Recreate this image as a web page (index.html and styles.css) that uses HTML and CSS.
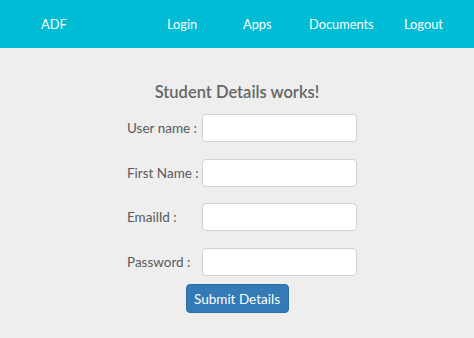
FILE: index.html
```html
<!DOCTYPE html>
<html>
<head>
<meta charset="utf-8">
<link rel="stylesheet" href="styles.css">
</head>
<body>
<nav class="navbar">
  <a class="brand">ADF</a>
  <ul class="nav-links">
    <li class="nav-login"><a>Login</a></li>
    <li class="nav-apps"><a>Apps</a></li>
    <li class="nav-docs"><a>Documents</a></li>
    <li class="nav-logout"><a>Logout</a></li>
  </ul>
</nav>
<main class="content">
  <h2 class="title">Student Details works!</h2>
  <form class="form">
    <div class="row"><label>User name :</label><input type="text"></div>
    <div class="row"><label>First Name :</label><input type="text"></div>
    <div class="row"><label>EmailId :</label><input type="text"></div>
    <div class="row"><label>Password :</label><input type="password"></div>
    <button type="button" class="btn">Submit Details</button>
  </form>
</main>
</body>
</html>
```
FILE: styles.css
```css
html, body {
  margin: 0;
  padding: 0;
  height: 100%;
}
body {
  background: #eeeeee;
  font-family: Lato, "Open Sans", sans-serif;
  color: #555;
}
.navbar {
  height: 48px;
  background: #00bcd4;
  display: flex;
  align-items: center;
  color: #fff;
  font-size: 12.8px;
}
.brand {
  margin-left: 41px;
  width: 24px;
}
.nav-links {
  list-style: none;
  margin: 0;
  padding: 0;
  display: flex;
}
.nav-login { margin-left: 102px; width: 76px; }
.nav-apps { width: 66px; }
.nav-docs { width: 95px; }
.nav-logout { }
.content {
  display: flex;
  flex-direction: column;
  align-items: center;
}
.title {
  margin: 33px 0 0;
  font-size: 16.5px;
  font-weight: 600;
  color: #666;
  line-height: 22px;
}
.form {
  display: flex;
  flex-direction: column;
  align-items: center;
  margin-top: 11px;
}
.row {
  display: flex;
  align-items: center;
  width: 230px;
  margin-left: 10px;
  margin-bottom: 16.7px;
}
.row label {
  width: 75px;
  font-size: 13.5px;
  color: #5a5a5a;
}
.row input {
  box-sizing: border-box;
  width: 155px;
  height: 28px;
  border: 1px solid #d2d2d2;
  border-radius: 4px;
  background: #fff;
  margin: 0;
}
.row:last-of-type {
  margin-bottom: 8px;
}
.btn {
  width: 103px;
  height: 29px;
  background: #337ab7;
  color: #fff;
  border: 1px solid #2e6da4;
  border-radius: 4px;
  font-family: Lato, "Open Sans", sans-serif;
  font-size: 13.5px;
  padding: 0;
}
```
